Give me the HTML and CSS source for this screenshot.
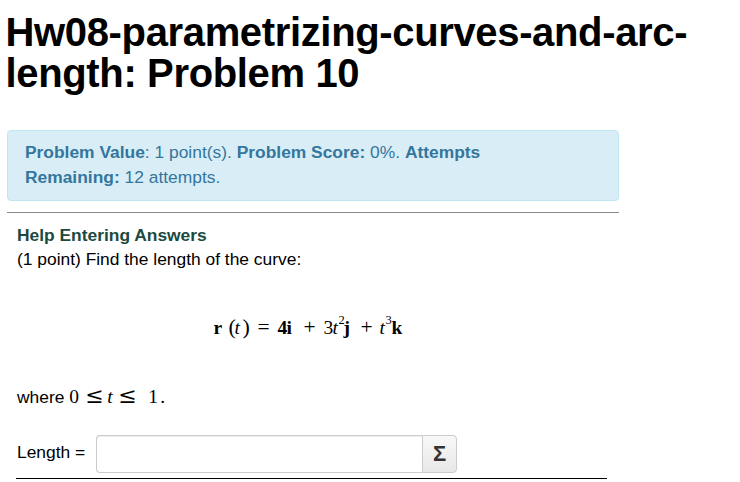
FILE: index.html
```html
<!DOCTYPE html>
<html>
<head>
<meta charset="utf-8">
<title>Hw08 Problem 10</title>
<link rel="stylesheet" href="styles.css">
</head>
<body>
<div class="page">
  <h1 class="title">Hw08-parametrizing-curves-and-arc-length: Problem 10</h1>
  <div class="main">
    <div class="alert">
      <b>Problem Value</b>: 1 point(s). <b>Problem Score:</b> 0%. <b>Attempts Remaining:</b> 12 attempts.
    </div>
    <hr class="divider">
    <div class="problem">
      <div class="help">Help Entering Answers</div>
      <div class="line">(1 point) Find the length of the curve:</div>
      <div class="display-math"><span class="formula"><span class="c mb w15">r</span><span class="c paren w6">(</span><span class="c mi w8">t</span><span class="c paren w15">)</span><span class="c op w20">=</span><span class="c mb w9">4</span><span class="c mb w17">i</span><span class="c op w20">+</span><span class="c m w9">3</span><span class="c mi w6">t</span><span class="c sup w5">2</span><span class="c mb w17">j</span><span class="c op w19">+</span><span class="c mi w6">t</span><span class="c sup w6">3</span><span class="c mb w19">k</span></span></div>
      <div class="line where">where <span class="c m w16">0</span><span class="c le w22">≤</span><span class="c mi w11">t</span><span class="c le w30">≤</span><span class="c m w12">1</span><span class="c m w6">.</span></div>
      <div class="answer-row">
        <span class="label">Length =</span>
        <div class="input-group">
          <input class="answer" type="text" aria-label="Length">
          <button class="equation-btn" type="button">Σ</button>
        </div>
      </div>
    </div>
  </div>
</div>
</body>
</html>
```

FILE: styles.css
```css
html, body {
  margin: 0;
  padding: 0;
  background: #ffffff;
}

body {
  font-family: "Liberation Sans", Arial, sans-serif;
  font-size: 17.4px;
  color: #000;
}

.page {
  padding-left: 7px;
}

.title {
  margin: 12px 0 0 -1.5px;
  font-family: "Liberation Sans", Arial, sans-serif;
  font-weight: bold;
  font-size: 40px;
  letter-spacing: -0.35px;
  line-height: 41px;
  color: #000;
}

.main {
  width: 612px;
}

.alert {
  margin-top: 36px;
  padding: 9px 44px 10px 17px;
  background: #d9edf7;
  border: 1px solid #bce8f1;
  border-radius: 4px;
  color: #34769c;
  line-height: 25px;
}

.divider {
  margin: 11px 0 0 0;
  height: 0;
  border: 0;
  border-top: 1px solid #888;
}

.problem {
  margin: 0 12px 0 9px;
  padding: 10px 0 5px 1px;
  border-bottom: 1px solid #000;
  line-height: 24px;
}

.help {
  font-weight: bold;
  color: #1c4a40;
}

.line {
  color: #000;
}

.display-math {
  margin-top: 45px;
  text-align: center;
  font-family: "Liberation Serif", "Times New Roman", serif;
  font-size: 19.5px;
  line-height: 24px;
}

.formula {
  display: inline-block;
  text-align: left;
  white-space: nowrap;
}

/* one cell per math glyph */
.c {
  display: inline-block;
  line-height: 0;
  text-align: left;
  font-family: "Liberation Serif", "Times New Roman", serif;
  font-size: 19.5px;
}

.mi { font-style: italic; }
.mb { font-weight: bold; }
.op { font-size: 21.5px; }
.paren { font-size: 22px; }
.sup {
  font-size: 12.5px;
  vertical-align: 10px;
}
.le {
  font-family: "DejaVu Serif", serif;
  font-size: 22px;
}

.w5 { width: 5px; }
.w6 { width: 6px; }
.w8 { width: 8px; }
.w9 { width: 9px; }
.w11 { width: 11px; }
.w12 { width: 12px; }
.w15 { width: 15px; }
.w16 { width: 16px; }
.w17 { width: 17px; }
.w19 { width: 19px; }
.w20 { width: 20px; }
.w22 { width: 22px; }
.w30 { width: 30px; }

.where {
  margin-top: 45px;
}

.answer-row {
  margin-top: 26px;
  display: flex;
  align-items: center;
  gap: 11px;
  height: 38px;
}

.label {
  color: #000;
  margin-bottom: 4px;
}

.input-group {
  display: flex;
  height: 38px;
}

.answer {
  box-sizing: border-box;
  width: 326px;
  height: 38px;
  margin: 0;
  padding: 6px 10px;
  border: 1px solid #cccccc;
  border-right: 0;
  border-radius: 4px 0 0 4px;
  box-shadow: inset 0 1px 1px rgba(0, 0, 0, 0.075);
  font-family: "Liberation Sans", Arial, sans-serif;
  font-size: 17px;
  background: #fff;
}

.equation-btn {
  box-sizing: border-box;
  width: 35px;
  height: 38px;
  margin: 0;
  padding: 0;
  border: 1px solid #cccccc;
  border-radius: 0 4px 4px 0;
  background: linear-gradient(#f8f8f8, #e8e8e8);
  color: #333;
  font-family: "Liberation Sans", Arial, sans-serif;
  font-weight: bold;
  font-size: 22px;
  line-height: 36px;
  text-align: center;
}
```
